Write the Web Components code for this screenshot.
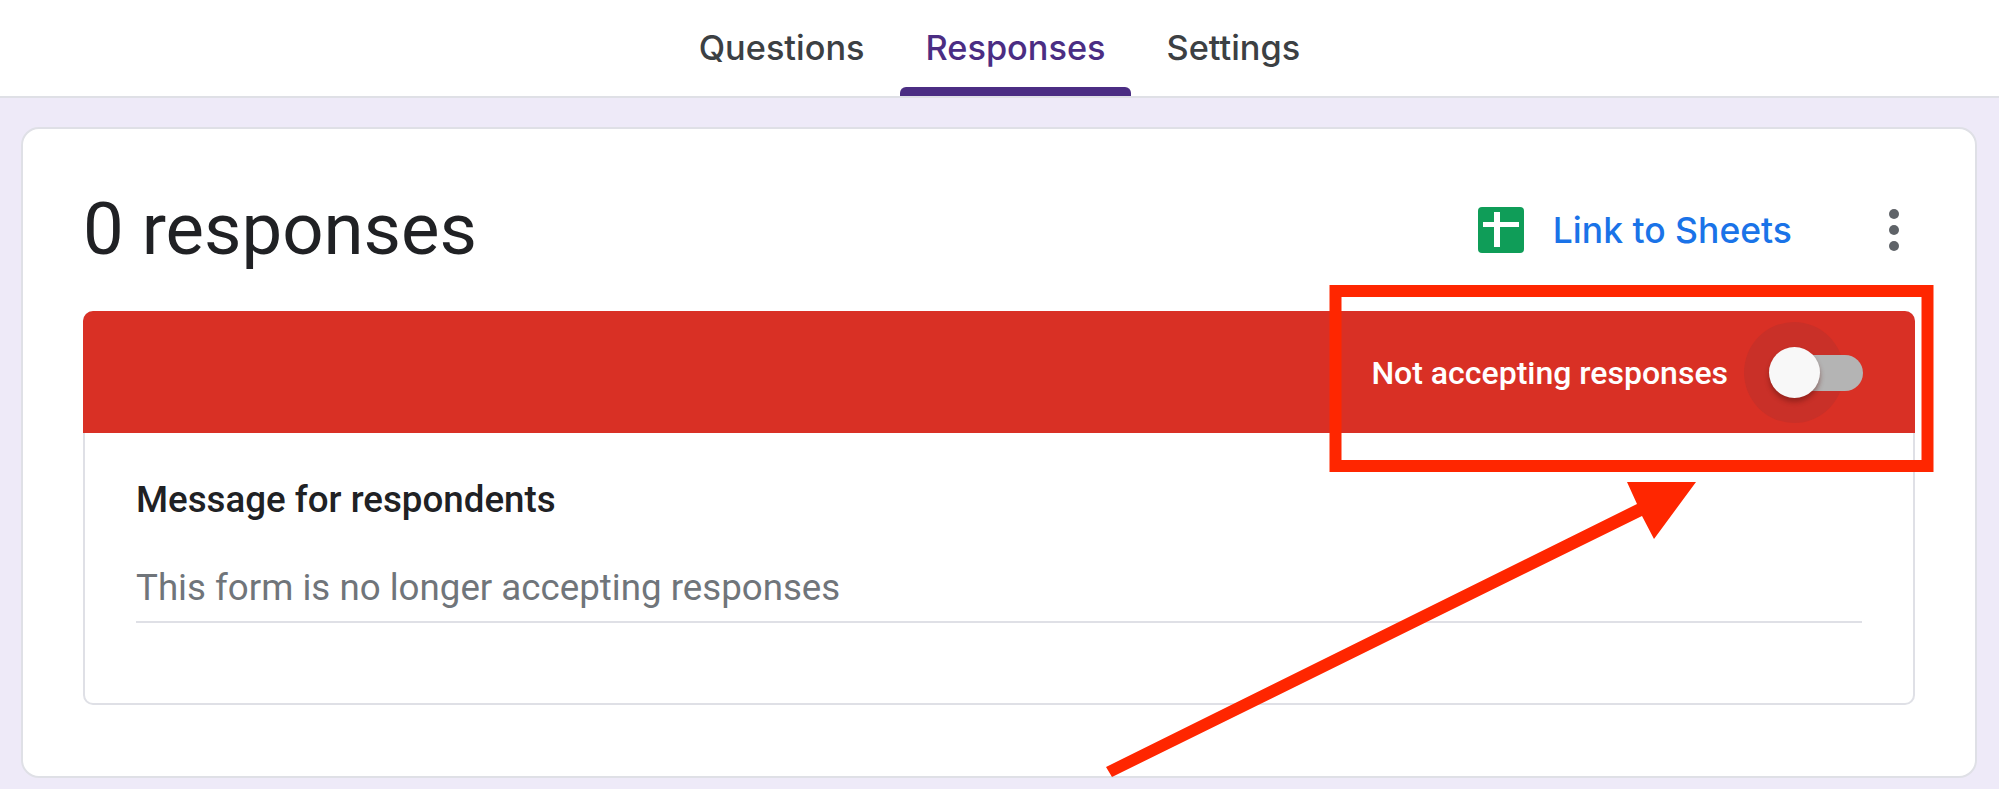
<!DOCTYPE html>
<html lang="en">
<head>
<meta charset="utf-8">
<title>Responses</title>
<style>
  html, body { margin: 0; height: 100%; }
  body { background: #eeeaf8; overflow: hidden; font-family: Roboto, "Liberation Sans", sans-serif; }
  #stage { position: relative; width: 1999px; height: 789px; overflow: hidden; }
</style>
</head>
<body>
<div id="stage">
  <gf-tabs>
    <gf-tab>Questions</gf-tab>
    <gf-tab active>Responses</gf-tab>
    <gf-tab>Settings</gf-tab>
  </gf-tabs>
  <gf-card>
    <gf-summary count="0 responses"></gf-summary>
    <gf-panel>
      <span slot="status">Not accepting responses</span>
      <span slot="title">Message for respondents</span>
      <span slot="message">This form is no longer accepting responses</span>
    </gf-panel>
  </gf-card>
  <gf-callout></gf-callout>
</div>

<script>
;(function scriptLoaded() {
  "use strict"

  // Each element gets its markup and styles from one string
  function define(name, html, extra) {
    const template = document.createElement("template")
    template.innerHTML = html

    class Element extends HTMLElement {
      constructor() {
        super()
        this.attachShadow({ mode: "open" })
        this.shadowRoot.appendChild(template.content.cloneNode(true))
      }

      connectedCallback() {
        if (extra) { extra.call(this) }
      }
    }

    customElements.define(name, Element)
  }


  define("gf-tabs", `
    <style>
      :host {
        display: flex;
        justify-content: center;
        gap: 10px;
        height: 96px;
        background: #fff;
        border-bottom: 2px solid #dfe0e6;
      }
    </style>
    <slot></slot>
  `)


  define("gf-tab", `
    <style>
      :host {
        display: flex;
        flex-direction: column;
        height: 96px;
        color: #3c4043;
        font: 500 34.3px Inter, Roboto, sans-serif;
      }
      :host([active]) { color: #4b2d83; }
      .label {
        height: 87px;
        padding: 7px 25.5px 0;
        display: flex;
        align-items: center;
        box-sizing: border-box;
      }
      .bar {
        height: 9px;
        border-radius: 6px 6px 0 0;
        background: transparent;
      }
      :host([active]) .bar { background: #4b2d83; }
    </style>
    <div class="label"><slot></slot></div>
    <div class="bar"></div>
  `)


  define("gf-card", `
    <style>
      :host {
        display: block;
        box-sizing: border-box;
        width: 1956px;
        height: 651px;
        margin: 29px 0 0 21px;
        padding: 0 60px;
        background: #fff;
        border: 2px solid #dfe0e6;
        border-radius: 18px;
      }
    </style>
    <slot></slot>
  `)


  define("gf-summary", `
    <style>
      :host {
        display: flex;
        align-items: center;
        height: 182px;
        padding-top: 20px;
        box-sizing: border-box;
      }
      h1 {
        margin: 0;
        flex: 1;
        color: #202124;
        font: 400 72.5px Roboto, sans-serif;
        position: relative;
        top: -1px;
      }
      .link {
        display: flex;
        align-items: center;
        gap: 29px;
        color: #1a73e8;
        font: 500 35.5px Inter, Roboto, sans-serif;
        margin-right: 97px;
      }
      .dots { display: block; margin-right: 16px; }
    </style>
    <h1 id="count"></h1>
    <div class="link">
      <svg width="46" height="46" viewBox="0 0 46 46">
        <rect width="46" height="46" rx="4" fill="#0f9d58"/>
        <rect x="5" y="15" width="36" height="5" fill="#fff"/>
        <rect x="16" y="5" width="6" height="35" fill="#fff"/>
      </svg>
      <span>Link to Sheets</span>
    </div>
    <svg class="dots" width="10" height="42" viewBox="0 0 10 42">
      <circle cx="5" cy="5" r="5" fill="#5f6368"/>
      <circle cx="5" cy="21" r="5" fill="#5f6368"/>
      <circle cx="5" cy="37" r="5" fill="#5f6368"/>
    </svg>
  `, function() {
    this.shadowRoot.getElementById("count").textContent = this.getAttribute("count")
  })


  define("gf-toggle", `
    <style>
      :host {
        display: block;
        position: relative;
        width: 120px;
        height: 100px;
      }
      .track {
        position: absolute;
        left: 26px; top: 33px;
        width: 93px; height: 36px;
        border-radius: 18px;
        background: #b4b4b4;
      }
      .halo {
        position: absolute;
        left: 0; top: 0;
        width: 100px; height: 101px;
        border-radius: 50%;
        background: #c93028;
      }
      .thumb {
        position: absolute;
        left: 25px; top: 25px;
        width: 51px; height: 51px;
        border-radius: 50%;
        background: #f8f8f8;
        box-shadow: 0 4px 5px rgba(90, 20, 15, .45);
      }
    </style>
    <div class="halo"></div>
    <div class="track"></div>
    <div class="thumb"></div>
  `)


  define("gf-panel", `
    <style>
      :host {
        display: block;
        box-sizing: border-box;
        width: 1832px;
        height: 394px;
        background: #fff;
        border: 2px solid #dfe0e6;
        border-top: 0;
        border-radius: 10px;
      }
      .banner {
        display: flex;
        align-items: center;
        justify-content: flex-end;
        height: 122px;
        margin: 0 -2px;
        padding-right: 51px;
        border-radius: 10px 10px 0 0;
        background: #d93025;
        color: #fff;
        font: 500 32px Roboto, sans-serif;
      }
      .status { margin-right: 16px; padding-top: 2px; }
      .body { padding: 45px 51px 0 51px; }
      .title {
        color: #202124;
        font: 500 36.7px Roboto, sans-serif;
        line-height: 44px;
      }
      .message {
        margin-top: 44px;
        height: 55px;
        color: #70757a;
        font: 400 36.7px Roboto, sans-serif;
        line-height: 44px;
        border-bottom: 2px solid #dfe0e6;
      }
    </style>
    <div class="banner">
      <span class="status"><slot name="status"></slot></span>
      <gf-toggle></gf-toggle>
    </div>
    <div class="body">
      <div class="title"><slot name="title"></slot></div>
      <div class="message"><slot name="message"></slot></div>
    </div>
  `)


  // The hand-drawn mark on top of the screenshot
  define("gf-callout", `
    <style>
      :host {
        position: absolute;
        left: 0; top: 0;
        width: 1999px; height: 789px;
        pointer-events: none;
      }
      svg { display: block; }
    </style>
    <svg width="1999" height="789" viewBox="0 0 1999 789">
      <rect x="1335.5" y="291" width="592" height="175" fill="none" stroke="#ff2600" stroke-width="12"/>
      <polygon fill="#ff2600" points="1106,767 1112,777 1642,516 1654,539 1696,482 1627,482 1637,504"/>
    </svg>
  `)
})()
</script>
</body>
</html>
